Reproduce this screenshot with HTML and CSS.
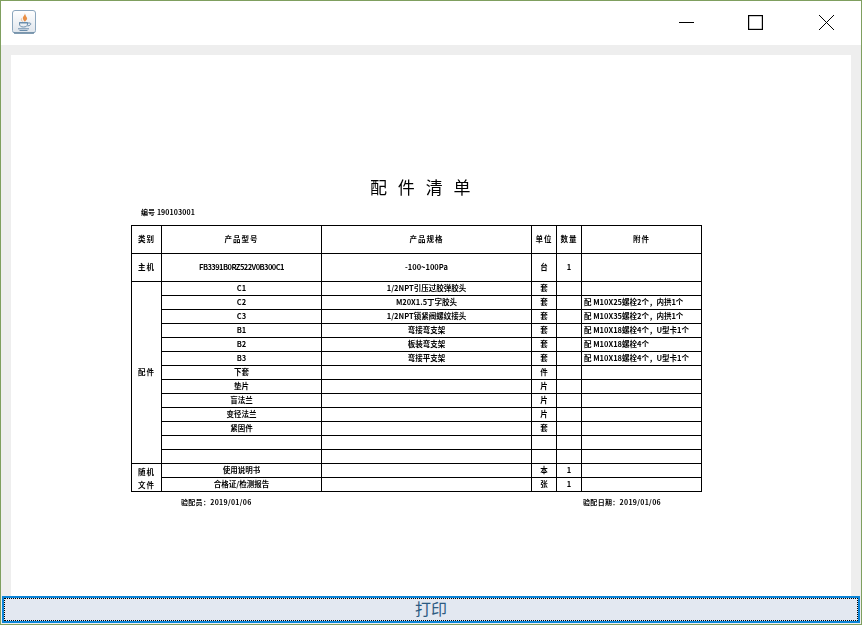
FILE: index.html
```html
<!DOCTYPE html>
<html lang="zh">
<head>
<meta charset="utf-8">
<title>配件清单</title>
<link rel="stylesheet" href="styles.css">
</head>
<body>
<div class="window">
  <header class="titlebar">
    <div class="app-icon">
      <svg width="24" height="24" viewBox="0 0 24 24">
        <defs>
          <linearGradient id="bg" x1="0" y1="0" x2="0" y2="1"><stop offset="0" stop-color="#ffffff"/><stop offset="1" stop-color="#dfe5ec"/></linearGradient>
        </defs>
        <rect x="0.5" y="0.5" width="23" height="22.5" rx="2.5" fill="url(#bg)" stroke="#8ba6bd"/>
        <path d="M2 23 H22" stroke="#3d6484" stroke-width="1" fill="none"/>
        <path d="M12.500 3 C14 5 10 6.500 11 9 C11.500 10.500 12.500 11 12.800 11.800 C14.500 10 16 9 14.500 7 C13.800 6 13.500 4.500 12.500 3Z" fill="#e98f45"/>
        <path d="M9.500 8.500 C9 10 10 11 10.500 11.500" stroke="#f3b583" fill="none"/>
        <path d="M7.500 12.500 H15.500 V14 C15.500 16 14 17 11.500 17 C9 17 7.500 16 7.500 14Z" fill="none" stroke="#6b8dab" stroke-width="1"/>
        <path d="M7 13 H16 M16 13 H18 C19.500 13.500 19 15.500 15.500 16" stroke="#6b8dab" stroke-width="1" fill="none"/>
        <path d="M6 18.800 H17 M7.500 20.500 H15.500" stroke="#6b8dab" stroke-width="1"/>
      </svg>
    </div>
    <div class="win-controls">
      <svg class="ctl" width="15" height="15" viewBox="0 0 15 15"><path d="M0 7.500 H15" stroke="#000" stroke-width="1"/></svg>
      <svg class="ctl" width="15" height="15" viewBox="0 0 15 15"><rect x="0.600" y="0.600" width="13.800" height="13.800" fill="none" stroke="#000" stroke-width="1.200"/></svg>
      <svg class="ctl ctl-close" width="15" height="15" viewBox="0 0 15 15"><path d="M0 0 L15 15 M15 0 L0 15" stroke="#000" stroke-width="1"/></svg>
    </div>
  </header>
  <main class="content">
    <section class="panel">
      <div class="sheet">
        <h1 class="sheet-title">配 件 清 单</h1>
        <p class="sheet-no">编号 190103001</p>
        <table class="list">
          <colgroup>
            <col class="c1"><col class="c2"><col class="c3"><col class="c4"><col class="c5"><col class="c6">
          </colgroup>
          <tbody>
            <tr class="tall spaced"><td>类别</td><td>产品型号</td><td>产品规格</td><td>单位</td><td>数量</td><td>附件</td></tr>
            <tr class="tall"><td class="head">主机</td><td class="narrow">FB3391B0RZ522V0B300C1</td><td>-100~100Pa</td><td>台</td><td>1</td><td></td></tr>
            <tr><td rowspan="13" class="head">配件</td><td>C1</td><td>1/2NPT引压过胶弹胶头</td><td>套</td><td></td><td></td></tr>
            <tr><td>C2</td><td>M20X1.5丁字胶头</td><td>套</td><td></td><td class="left">配 M10X25螺栓2个&#xFF0C;内拱1个</td></tr>
            <tr><td>C3</td><td>1/2NPT锁紧阀螺纹接头</td><td>套</td><td></td><td class="left">配 M10X35螺栓2个&#xFF0C;内拱1个</td></tr>
            <tr><td>B1</td><td>弯接弯支架</td><td>套</td><td></td><td class="left">配 M10X18螺栓4个&#xFF0C;U型卡1个</td></tr>
            <tr><td>B2</td><td>板装弯支架</td><td>套</td><td></td><td class="left">配 M10X18螺栓4个</td></tr>
            <tr><td>B3</td><td>弯接平支架</td><td>套</td><td></td><td class="left">配 M10X18螺栓4个&#xFF0C;U型卡1个</td></tr>
            <tr><td>下套</td><td></td><td>件</td><td></td><td></td></tr>
            <tr><td>垫片</td><td></td><td>片</td><td></td><td></td></tr>
            <tr><td>盲法兰</td><td></td><td>片</td><td></td><td></td></tr>
            <tr><td>变径法兰</td><td></td><td>片</td><td></td><td></td></tr>
            <tr><td>紧固件</td><td></td><td>套</td><td></td><td></td></tr>
            <tr><td></td><td></td><td></td><td></td><td></td></tr>
            <tr><td></td><td></td><td></td><td></td><td></td></tr>
            <tr><td rowspan="2" class="stack head">随机<br>文件</td><td>使用说明书</td><td></td><td>本</td><td>1</td><td></td></tr>
            <tr><td>合格证/检测报告</td><td></td><td>张</td><td>1</td><td></td></tr>
          </tbody>
        </table>
        <div class="sign">
          <span>验配员&#xFF1A;2019/01/06</span>
          <span>验配日期&#xFF1A;2019/01/06</span>
        </div>
      </div>
    </section>
  </main>
  <div class="actions"><button class="print" type="button"><span class="print-inner">打印</span></button></div>
</div>
</body>
</html>
```
FILE: styles.css
```css
* { box-sizing: border-box; }
html, body { margin: 0; height: 100%; }
body { background: #fff; overflow: hidden; }
.window {
  width: 862px;
  height: 625px;
  display: flex;
  flex-direction: column;
  border: 1px solid #7f9f5f;
  background: #eeeeee;
}
.titlebar {
  height: 44px;
  flex: none;
  background: #fff;
  display: flex;
  align-items: flex-start;
  justify-content: space-between;
  padding: 9px 27px 0 11px;
}
.app-icon { width: 24px; height: 24px; }
.app-icon svg { display: block; }
.win-controls { display: flex; gap: 54px; padding-top: 5px; }
.ctl { display: block; }
.ctl-close { margin-left: 2px; }
.content {
  flex: 1;
  min-height: 0;
  padding: 10px 10px 0 10px;
  display: flex;
}
.panel {
  flex: 1;
  background: #fff;
  padding: 123px 0 0 120px;
}
.sheet {
  width: 570px;
  font-family: "Noto Sans CJK SC", "Liberation Sans", sans-serif;
  font-size: 7.5px;
  font-weight: 700;
  color: #000;
  filter: grayscale(1) contrast(6);
}
.sheet-title {
  margin: 0;
  height: 21px;
  line-height: 18px;
  font-size: 17px;
  font-weight: 400;
  text-align: center;
  letter-spacing: 0.5px;
  padding-left: 9px;
  word-spacing: 6px;
}
.sheet-no {
  margin: 6px 0 0 10px;
  height: 20px;
  line-height: 14px;
  font-size: 7px;
  letter-spacing: 0.1px;
}
.list {
  table-layout: fixed;
  border-collapse: collapse;
  width: 570px;
  border: 1px solid #000;
}
.c1 { width: 30px; }
.c2 { width: 160px; }
.c3 { width: 210px; }
.c4 { width: 25px; }
.c5 { width: 25px; }
.c6 { width: 120px; }
.list td {
  border: 1px solid #000;
  height: 14px;
  padding: 0 0 2px;
  line-height: 11px;
  text-align: center;
  overflow: hidden;
  white-space: nowrap;
}
.list .tall td { height: 28px; }
.list .spaced td { letter-spacing: 1px; }
.list td.head { letter-spacing: 1px; }
.list td.narrow { letter-spacing: -0.55px; }
.list td.left { text-align: left; padding-left: 2px; letter-spacing: 0; }
.list td.stack { line-height: 13px; padding-bottom: 0; }
.sign {
  display: flex;
  justify-content: space-between;
  padding: 4px 40px 0 50px;
  line-height: 12px;
  font-size: 7px;
  letter-spacing: 0.3px;
}
.actions {
  flex: none;
  height: 28px;
  padding: 0 0 1px 1px;
}
.print {
  display: block;
  width: 858px;
  height: 27px;
  margin: 0;
  padding: 0;
  border: 2px solid #0a84d8;
  background: #e3e8f1;
}
.print-inner {
  display: block;
  height: 100%;
  border: 1px dotted #000;
  font-family: "Noto Sans CJK SC", sans-serif;
  font-size: 16px;
  line-height: 19px;
  color: #2c5a82;
  text-align: center;
}
```
